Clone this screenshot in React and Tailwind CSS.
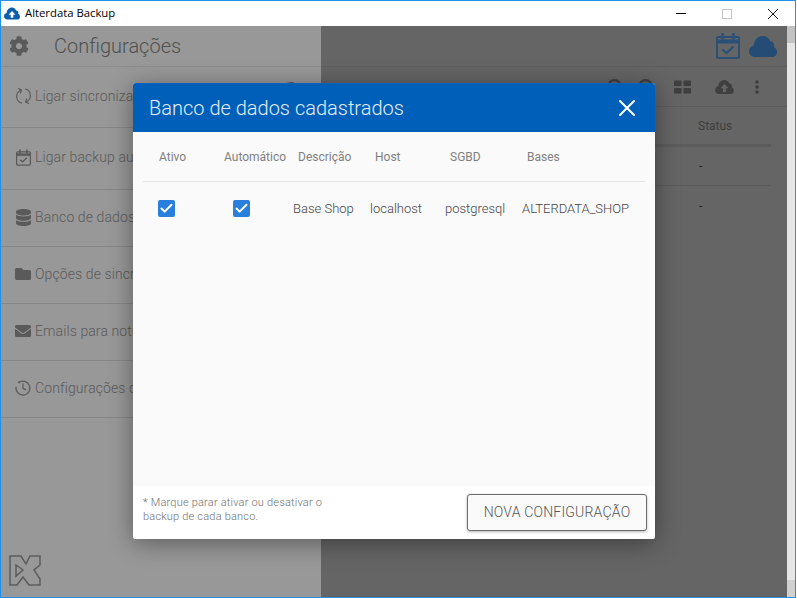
import React from "react";
import { Check, X } from "lucide-react";
import { FaCog, FaDatabase, FaFolder, FaEnvelope } from "react-icons/fa";

const CLOUD = "M6 21C2.5 21 0 18.5 0 15.2C0 12.2 2 10 4.6 9.5C5 4 9 0 13.8 0C17.2 0 20 2 21.2 5.3C24 5.2 25.8 8 25 11C27 12 28 14 28 16C28 19 26 21 23 21Z";

function Cloud({ className, color, arrow }) {
  return (
    <svg viewBox="0 0 28 21" className={className}>
      <path d={CLOUD} fill={color} />
      {arrow && <path d="M14 6l6 6.5h-3.7V18h-4.6v-5.500H8z" fill={arrow} />}
    </svg>
  );
}

function CalendarIcon({ className }) {
  return (
    <svg viewBox="0 0 24 26" className={className} fill="none" stroke="currentColor">
      <rect x="1" y="4" width="22" height="21" rx="1.5" strokeWidth="2" />
      <path d="M1 7h22v3H1z" fill="currentColor" strokeWidth="1" />
      <path d="M6.500 1v5M17.500 1v5" strokeWidth="2.500" strokeLinecap="round" />
      <path d="M6.500 16.500l4 3.500 7-6.500" strokeWidth="2.200" />
    </svg>
  );
}

function SyncIcon({ className }) {
  return (
    <svg viewBox="0 0 14 17" className={className} fill="none" stroke="currentColor" strokeWidth="1.100">
      <path d="M5.500 15.300A6.500 6.500 0 0 1 4.500 3" />
      <path d="M8.500 1.700A6.500 6.500 0 0 1 9.500 14" />
      <path d="M2 1.300l3 1.500-1 3.200" />
      <path d="M12 15.700l-3-1.500 1-3.200" />
    </svg>
  );
}

function ClockIcon({ className }) {
  return (
    <svg viewBox="0 0 18 18" className={className} fill="none" stroke="currentColor" strokeWidth="1.400">
      <path d="M4 3.100A7.800 7.800 0 1 1 1.300 7.500" />
      <path d="M4.500 1v2.600" />
      <path d="M9 4v5.300l3.500 2" />
    </svg>
  );
}

const menuItems = [
  { label: "Ligar sincronização", h: "h-[61px]", icon: <SyncIcon className="w-[15px] h-[18px]" />, toggle: true },
  { label: "Ligar backup automático", h: "h-[62px]", icon: <CalendarIcon className="w-[15px] h-[17px]" /> },
  { label: "Banco de dados cadastrados", h: "h-[57px]", icon: <FaDatabase className="w-[15px] h-[17px]" /> },
  { label: "Opções de sincronização", h: "h-[57px]", icon: <FaFolder className="w-[16px] h-[16px]" /> },
  { label: "Emails para notificações", h: "h-[57px]", icon: <FaEnvelope className="w-[16px] h-[16px]" /> },
  { label: "Configurações de horário", h: "h-[57px]", icon: <ClockIcon className="w-[16px] h-[16px]" /> },
];

function CheckBox() {
  return (
    <span className="w-[17px] h-[17px] rounded-[2px] bg-[#2a7fdc] flex items-center justify-center">
      <Check className="w-[15px] h-[15px] text-white" strokeWidth={3.200} />
    </span>
  );
}

export default function App() {
  return (
    <div className="w-[796px] h-[598px] overflow-hidden flex flex-col bg-white border-x border-b border-[#2090e8] font-['Roboto',sans-serif]">
      <div className="h-[26px] shrink-0 flex items-center bg-white border-t border-[#2090e8]">
        <Cloud className="w-[16px] h-[13px] ml-[3px]" color="#0b5cad" arrow="white" />
        <span className="ml-[5px] text-[11.3px] text-black font-['Open_Sans',sans-serif]">Alterdata Backup</span>
        <div className="ml-auto flex items-center h-full pr-[17px] gap-[36px]">
          <span className="w-[10px] h-px bg-black" />
          <span className="w-[10px] h-[10px] border border-[#c4c4c4]" />
          <svg viewBox="0 0 10 10" className="w-[10px] h-[10px]" stroke="black" strokeWidth="0.900"><path d="M0 0l10 10M10 0L0 10" /></svg>
        </div>
      </div>

      <div className="relative flex-1 flex min-h-0">
        <aside className="w-[320px] shrink-0 bg-[#989898] flex flex-col text-[#5a5a5a]">
          <div className="h-[41px] shrink-0 flex items-center border-b border-[#8c8c8c]">
            <FaCog className="w-[20px] h-[20px] ml-[8px]" />
            <span className="ml-[25px] text-[20px] font-light text-[#505050]">Configurações</span>
          </div>
          {menuItems.map((item) => (
            <div key={item.label} className={`${item.h} shrink-0 flex items-center gap-[4px] pl-[14px] pb-[2px] border-b border-[#868686] text-[14px] font-light tracking-[0.1px] whitespace-nowrap overflow-hidden`}>
              <span className="w-[16px] flex justify-center">{item.icon}</span>
              <span>{item.label}</span>
              {item.toggle && <span className="ml-auto mr-[20px] mb-[8px] w-[20px] h-[20px] rounded-full bg-[#555]" />}
            </div>
          ))}
          <div className="mt-auto mb-[11px] ml-[8px]">
            <svg viewBox="-1 -1 32 31" className="w-[32px] h-[31px]" fill="none" stroke="#5c5c5c" strokeWidth="1.500">
              <path d="M0 0H11L16 8L20 0H30V9L24 14L30 23V29H19L13 21L7 29H0Z" />
              <path d="M6 9L13 14L6 20Z" />
            </svg>
          </div>
        </aside>

        <main className="flex-1 bg-[#656565] flex flex-col min-w-0">
          <div className="h-[41px] shrink-0 flex items-center justify-end gap-[9px] pr-[10px] border-b border-[#5e5e5e]">
            <CalendarIcon className="w-[24px] h-[26px] text-[#2a5078]" />
            <Cloud className="w-[28px] h-[21px]" color="#254c75" />
          </div>
          <div className="h-[40px] shrink-0 flex items-center justify-end pr-[28px] border-b border-[#5c5c5c]">
            <svg viewBox="0 0 16 16" className="w-[15px] h-[15px] mr-[16px]" fill="none" stroke="#3f3f3f" strokeWidth="2.200"><circle cx="8" cy="8" r="6.800" /></svg>
            <svg viewBox="0 0 16 16" className="w-[15px] h-[15px] mr-[21px]" fill="none" stroke="#3f3f3f" strokeWidth="2.200"><circle cx="8" cy="8" r="6.800" /></svg>
            <svg viewBox="0 0 18 14" className="w-[17px] h-[14px] mr-[24px]" fill="#3f3f3f">
              <rect x="0" y="0" width="8" height="6" rx="1" /><rect x="10" y="0" width="8" height="6" rx="1" />
              <rect x="0" y="8" width="8" height="6" rx="1" /><rect x="10" y="8" width="8" height="6" rx="1" />
            </svg>
            <Cloud className="w-[19px] h-[14px] mr-[21px]" color="#3f3f3f" arrow="#656565" />
            <svg viewBox="0 0 4 14" className="w-[4px] h-[14px]" fill="#3f3f3f">
              <circle cx="2" cy="2" r="1.800" /><circle cx="2" cy="7" r="1.800" /><circle cx="2" cy="12" r="1.800" />
            </svg>
          </div>
          <div className="grid grid-cols-[1fr_73px] mr-[16px] text-[12px] text-[#3f3f3f]">
            <div className="h-[40px] border-b-[3px] border-[#5c5c5c]" />
            <div className="h-[40px] flex items-center border-b-[3px] border-[#5c5c5c]">Status</div>
            <div className="h-[39px] border-b border-[#5a5a5a]" />
            <div className="h-[39px] flex items-center border-b border-[#5a5a5a] text-[#222] pl-[1px]">-</div>
            <div className="h-[39px]" />
            <div className="h-[39px] flex items-center text-[#222] pl-[1px]">-</div>
          </div>
        </main>

        <div className="w-[8px] shrink-0 bg-[#e6e6e6] flex flex-col justify-between">
          <div className="h-[17px] bg-[#c2c2c2]" />
          <div className="h-[17px] bg-[#d0d0d0]" />
        </div>

        <div className="absolute left-[132px] top-[57px] w-[522px] h-[456px] rounded-[3px] overflow-hidden bg-[#fafafa] flex flex-col shadow-[0_4px_24px_rgba(0,0,0,0.4)]">
          <div className="h-[49px] shrink-0 bg-[#005fb8] flex items-center pl-[16px] pr-[14px]">
            <span className="text-[20px] font-light text-[#e3eefa]">Banco de dados cadastrados</span>
            <X className="ml-auto w-[28px] h-[28px] text-white" strokeWidth={1.700} />
          </div>
          <div className="flex-1 px-[10px]">
            <div className="h-[50px] flex items-center border-b border-[#e6e6e6] text-[12px] text-[#808080]">
              <span className="w-[81px] pl-[16px]">Ativo</span>
              <span className="w-[74px]">Automático</span>
              <span className="w-[77px]">Descrição</span>
              <span className="w-[75px]">Host</span>
              <span className="w-[77px]">SGBD</span>
              <span>Bases</span>
            </div>
            <div className="h-[53px] flex items-center text-[13px] font-light text-[#444]">
              <span className="w-[90px] pl-[15px]"><CheckBox /></span>
              <span className="w-[60px]"><CheckBox /></span>
              <span className="w-[77px]">Base Shop</span>
              <span className="w-[75px]">localhost</span>
              <span className="w-[77px]">postgresql</span>
              <span>ALTERDATA_SHOP</span>
            </div>
          </div>
          <div className="h-[53px] shrink-0 bg-white flex items-start pl-[10px] pr-[8px]">
            <p className="w-[200px] mt-[10px] text-[11px] font-light leading-[14px] tracking-[0.2px] text-[#707070]">* Marque parar ativar ou desativar o backup de cada banco.</p>
            <button className="ml-auto mt-[8px] w-[180px] h-[37px] rounded-[3px] border border-[#6b6b6b] bg-[#fafafa] shadow-[0_1px_3px_rgba(0,0,0,0.3)] text-[14px] font-light tracking-[0.2px] text-[#555]">NOVA CONFIGURAÇÃO</button>
          </div>
        </div>
      </div>
    </div>
  );
}
